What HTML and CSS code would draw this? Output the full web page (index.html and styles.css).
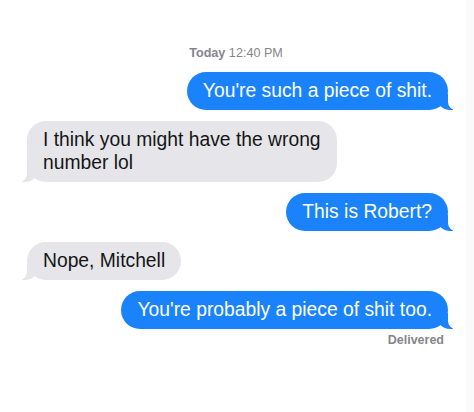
FILE: index.html
```html
<!DOCTYPE html>
<html>
<head>
<meta charset="utf-8">
<link rel="stylesheet" href="styles.css">
</head>
<body>
<div class="page">
  <div class="thread">
    <div class="stamp"><b>Today</b> 12:40 PM</div>
    <div class="msg sent">You're such a piece of shit.</div>
    <div class="msg recv">I think you might have the wrong number lol</div>
    <div class="msg sent">This is Robert?</div>
    <div class="msg recv">Nope, Mitchell</div>
    <div class="msg sent">You're probably a piece of shit too.</div>
    <div class="status">Delivered</div>
  </div>
</div>
</body>
</html>
```
FILE: styles.css
```css
html, body {
  margin: 0;
  padding: 0;
  background: #fafafa;
}
body {
  width: 474px;
  height: 412px;
  overflow: hidden;
  font-family: "Liberation Sans", Arial, sans-serif;
}
.page {
  width: 466px;
  height: 412px;
  background: #ffffff;
}
.thread {
  display: flex;
  flex-direction: column;
  gap: 11px;
  padding: 46px 18px 0 27px;
}
.stamp {
  align-self: center;
  margin-right: 3px;
  font-size: 12.6px;
  line-height: 15px;
  color: #86868a;
}
.stamp b {
  font-weight: bold;
}
.msg {
  position: relative;
  padding: 7px 16px 8px;
  border-radius: 19px;
  font-size: 19.3px;
  line-height: 23px;
}
.sent {
  align-self: flex-end;
  max-width: 310px;
  background: #1a83fc;
  color: #ffffff;
}
.recv {
  align-self: flex-start;
  max-width: 278px;
  background: #e5e5ea;
  color: #151515;
}
.msg::before,
.msg::after {
  content: "";
  position: absolute;
  bottom: 0;
}
.sent::before {
  right: -5px;
  width: 16px;
  height: 16px;
  background: #1a83fc;
  border-bottom-left-radius: 13px;
}
.sent::after {
  right: -9px;
  width: 9px;
  height: 17px;
  background: #ffffff;
  border-bottom-left-radius: 8px;
}
.recv::before {
  left: -5px;
  width: 16px;
  height: 16px;
  background: #e5e5ea;
  border-bottom-right-radius: 13px;
}
.recv::after {
  left: -9px;
  width: 9px;
  height: 17px;
  background: #ffffff;
  border-bottom-right-radius: 8px;
}
.status {
  align-self: flex-end;
  margin-top: -7px;
  margin-right: 4px;
  font-size: 12.5px;
  line-height: 15px;
  font-weight: bold;
  color: #86868a;
}
```
